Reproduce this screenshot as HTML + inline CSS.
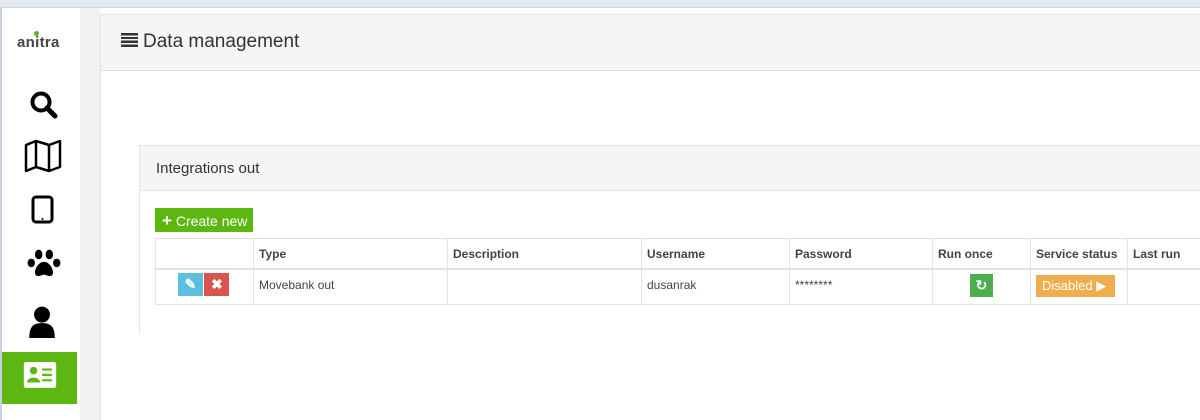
<!DOCTYPE html>
<html><head><style>
*{box-sizing:border-box;margin:0;padding:0}
body{width:1200px;height:420px;overflow:hidden;background:#fff;font-family:"Liberation Sans",sans-serif;position:relative}
.top{position:absolute;left:0;top:0;width:1200px;height:8px;background:#e4e7ec;border-bottom:1px solid #cfd5de}
.lb{position:absolute;left:0;top:8px;width:2px;height:412px;background:#c9d3e3}
.side{position:absolute;left:2px;top:8px;width:78px;height:412px;background:#fff}
.gcol{position:absolute;left:80px;top:8px;width:20px;height:412px;background:#f1f1f1}
.main{position:absolute;left:100px;top:14px;width:1100px;height:406px;background:#fff;border-left:1px solid #e2e2e2;border-top:1px solid #e6e6e6}
.hdr{height:56px;background:#f5f5f5;border-bottom:1px solid #ddd;font-size:19px;color:#333;padding:16px 0 0 20px}
.panel{position:absolute;left:139px;top:145px;width:1061px;height:188px;border-left:1px solid #e3e3e3;border-top:1px solid #e3e3e3}
.ph{height:45px;background:#f5f5f5;border-bottom:1px solid #e3e3e3;font-size:15px;color:#333;padding:14px 0 0 16px}
.btn{position:absolute;left:155px;top:208px;width:98px;height:24px;background:#5cb811;color:#fff;font-size:14px;padding:3px 0 0 7px;white-space:nowrap}
table{position:absolute;left:155px;top:238px;border-collapse:collapse;font-size:12px;color:#444;table-layout:fixed;width:1060px}
td{border:1px solid #e2e2e2;padding:0 5px;vertical-align:top;white-space:nowrap;overflow:hidden}
tr.h td{height:30px;font-weight:bold;padding-top:8px;border-bottom:2px solid #e2e2e2;color:#444}
tr.r td{height:36px;padding-top:8px}
.sq{display:inline-block;width:25px;height:23px;color:#fff;text-align:center;font-weight:bold;font-size:14px;line-height:23px;vertical-align:top}
.act{position:absolute;left:2px;top:352px;width:75px;height:52px;background:#5cb811}
</style></head><body>
<div class="top"></div><div class="lb"></div>
<div class="side">
<div style="position:absolute;left:15px;top:26px;font-size:15px;font-weight:bold;color:#444;letter-spacing:0.3px">an<span style="position:relative">i<span style="position:absolute;left:-1px;top:-3px;width:5px;height:5px;border-radius:50%;background:#5cb811"></span></span>tra</div>
<svg style="position:absolute;left:26px;top:82px" width="32" height="30" viewBox="0 0 32 30"><circle cx="13" cy="12" r="8.5" fill="none" stroke="#000" stroke-width="4"/><line x1="19" y1="18" x2="27" y2="26" stroke="#000" stroke-width="5" stroke-linecap="round"/></svg>
<svg style="position:absolute;left:22px;top:131px" width="38" height="34" viewBox="0 0 38 34"><path d="M2 6 L12 2 L25 6 L36 2 L36 28 L25 32 L12 28 L2 32 Z M12 2 L12 28 M25 6 L25 32" fill="none" stroke="#000" stroke-width="2.5" stroke-linejoin="round"/></svg>
<svg style="position:absolute;left:28px;top:187px" width="26" height="30" viewBox="0 0 26 30"><rect x="3" y="2" width="19" height="25" rx="3" fill="none" stroke="#000" stroke-width="3"/><circle cx="12.5" cy="24" r="1" fill="#000"/></svg>
<svg style="position:absolute;left:25px;top:240px" width="34" height="32" viewBox="0 0 32 30"><ellipse cx="11" cy="6" rx="3.5" ry="4.5"/><ellipse cx="21" cy="6" rx="3.5" ry="4.5"/><ellipse cx="4" cy="14" rx="3.5" ry="4"/><ellipse cx="28" cy="14" rx="3.5" ry="4"/><path d="M16 13 C10 13 6 22 8 25 C10 28 14 25 16 25 C18 25 22 28 24 25 C26 22 22 13 16 13Z"/></svg>
<svg style="position:absolute;left:26px;top:297px" width="28" height="34" viewBox="0 0 26 32"><circle cx="13" cy="9" r="7.5"/><path d="M1 31 C1 20 5 17 13 17 C21 17 25 20 25 31Z"/></svg>
</div>
<div class="act"><svg style="position:absolute;left:21px;top:10px" width="34" height="28" viewBox="0 0 30 26"><rect x="0" y="0" width="30" height="24" rx="2" fill="#fff"/><circle cx="9" cy="8" r="3.5" fill="#5cb811"/><path d="M3 19 C3 13 15 13 15 19Z" fill="#5cb811"/><rect x="17" y="6" width="9" height="2" fill="#5cb811"/><rect x="17" y="11" width="9" height="2" fill="#5cb811"/><rect x="17" y="16" width="9" height="2" fill="#5cb811"/></svg></div>
<div class="gcol"></div>
<div class="main"><div class="hdr"><span style="display:inline-block;width:17px;height:14px;background:repeating-linear-gradient(#333 0 2.4px,transparent 2.4px 3.8px);margin-right:5px"></span>Data management</div></div>
<div class="panel"><div class="ph">Integrations out</div></div>
<div class="btn"><b style="font-size:17px">+</b> Create new</div>
<table>
<colgroup><col style="width:98px"><col style="width:194px"><col style="width:194px"><col style="width:148px"><col style="width:143px"><col style="width:98px"><col style="width:97px"><col style="width:88px"></colgroup>
<tr class="h"><td></td><td>Type</td><td>Description</td><td>Username</td><td>Password</td><td>Run once</td><td>Service status</td><td>Last run</td></tr>
<tr class="r"><td style="padding:3px 0 0 22px"><span class="sq" style="background:#5bc0de">&#9998;</span> <span class="sq" style="background:#d9534f;margin-left:-2px">&#10006;</span></td><td>Movebank out</td><td></td><td>dusanrak</td><td>********</td><td style="text-align:center;padding-top:4px"><span class="sq" style="background:#4cae4c;width:23px">&#8635;</span></td><td style="padding-top:5px"><span style="display:inline-block;background:#f0ad4e;color:#fff;font-size:13px;padding:3px 6px;width:79px;white-space:nowrap">Disabled &#9654;</span></td><td></td></tr>
</table>
</body></html>
